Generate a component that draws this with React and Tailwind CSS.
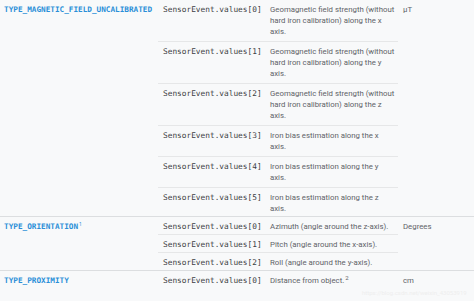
import React from 'react';

const groups = [
  {
    type: "TYPE_MAGNETIC_FIELD_UNCALIBRATED",
    unit: "μT",
    rows: [
      ["SensorEvent.values[0]", ["Geomagnetic field strength (without", "hard iron calibration) along the x", "axis."]],
      ["SensorEvent.values[1]", ["Geomagnetic field strength (without", "hard iron calibration) along the y", "axis."]],
      ["SensorEvent.values[2]", ["Geomagnetic field strength (without", "hard iron calibration) along the z", "axis."]],
      ["SensorEvent.values[3]", ["Iron bias estimation along the x", "axis."]],
      ["SensorEvent.values[4]", ["Iron bias estimation along the y", "axis."]],
      ["SensorEvent.values[5]", ["Iron bias estimation along the z", "axis."], null, true],
    ],
  },
  {
    type: "TYPE_ORIENTATION",
    sup: "1",
    unit: "Degrees",
    rows: [
      ["SensorEvent.values[0]", ["Azimuth (angle around the z-axis)."], null, true],
      ["SensorEvent.values[1]", ["Pitch (angle around the x-axis)."], null, true],
      ["SensorEvent.values[2]", ["Roll (angle around the y-axis)."], null, true],
    ],
  },
  {
    type: "TYPE_PROXIMITY",
    unit: "cm",
    rows: [["SensorEvent.values[0]", ["Distance from object."], "2"]],
  },
];

const mono = { fontFamily: '"DejaVu Sans Mono", "Liberation Mono", monospace' };

export default function App() {
  return (
    <div className="w-[474px] h-[301px] overflow-hidden bg-[#f8f9fa] relative font-['Roboto',sans-serif]">
      <table className="w-[474px] border-collapse table-fixed">
        <colgroup>
          <col className="w-[158px]" />
          <col className="w-[107px]" />
          <col className="w-[133px]" />
          <col />
        </colgroup>
        <tbody>
          {groups.map((g, gi) =>
            g.rows.map((r, ri) => {
              const pad = r[3] ? "pt-[4px] pb-[2px]" : "py-[4px]";
              const line = ri > 0 ? "border-t border-[#e6e7e8]" : "";
              return (
                <tr
                  key={`${gi}-${ri}`}
                  className={ri === 0 && gi > 0 ? "border-t border-[#dcdee0]" : ""}
                >
                  {ri === 0 && (
                    <td rowSpan={g.rows.length} className="align-top pl-1 pt-[4px] text-[7.7px] leading-[11px] whitespace-nowrap">
                      <span style={mono} className="font-bold text-[#2a8fd8]">
                        {g.type}
                      </span>
                      {g.sup && (
                        <span className="relative -top-[3px] text-[5px] leading-none text-[#2a8fd8] ml-[1px]">{g.sup}</span>
                      )}
                    </td>
                  )}
                  <td className={`align-top pl-[5px] ${pad} ${line}`}>
                    <div style={mono} className="text-[7.8px] leading-[11px] h-[11px] text-[#3c4043] whitespace-nowrap">
                      {r[0]}
                    </div>
                  </td>
                  <td className={`align-top pl-[5px] ${pad} text-[7.8px] leading-[11px] text-[#5f6368] ${line}`}>
                    {r[1].map((txt, li) => (
                      <div key={li} className="whitespace-nowrap h-[11px]">
                        {txt}
                        {li === r[1].length - 1 && r[2] && (
                          <span className="relative -top-[3px] text-[6px] leading-none ml-[1px]">{r[2]}</span>
                        )}
                      </div>
                    ))}
                  </td>
                  {ri === 0 && (
                    <td rowSpan={g.rows.length} className="align-top pl-[5px] pt-[4px] text-[7.8px] leading-[11px] text-[#5f6368]">
                      {g.unit}
                    </td>
                  )}
                </tr>
              );
            })
          )}
        </tbody>
      </table>
      <div className="absolute left-[362px] top-[290px] text-[6px] leading-none text-[#eeeeee] whitespace-nowrap">
        https://blog.csdn.net/weixin_43053919
      </div>
    </div>
  );
}
